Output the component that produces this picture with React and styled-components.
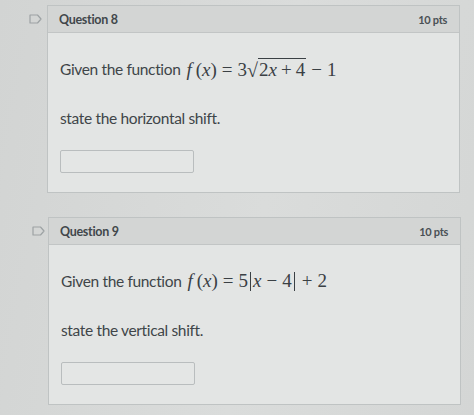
import React from 'react'
import styled, {createGlobalStyle} from 'styled-components'

const GlobalStyle = createGlobalStyle`
  html, body {
    margin: 0;
    padding: 0;
    background: #d5d7d6;
  }
  body {
    font-family: Lato, "Noto Sans", sans-serif;
    color: #3d4347;
  }
`

const Page = styled.div`
  width: 474px;
  height: 415px;
  padding-top: 5px;
  box-sizing: border-box;
  display: flex;
  flex-direction: column;
  gap: 24px;
  background: linear-gradient(100deg, #d2d4d3 0%, #dadcdb 55%, #d4d6d5 100%);
  overflow: hidden;
`

const Row = styled.div`
  display: flex;
  align-items: flex-start;
  padding-left: ${p => p.$indent}px;
`

const Flag = styled.div`
  width: ${p => p.$gutter}px;
  height: 27px;
  display: flex;
  align-items: center;
  flex-shrink: 0;
`

const Card = styled.section`
  width: 413px;
  border: 1px solid #bfc3c3;
  box-sizing: border-box;
  background: #e3e5e4;
`

const Header = styled.header`
  height: 27px;
  display: flex;
  align-items: center;
  justify-content: space-between;
  padding: 0 12px 0 11px;
  background: #d3d5d4;
  border-bottom: 1px solid #c2c5c5;
  box-sizing: border-box;
`

const Title = styled.h3`
  margin: 0;
  font-size: 12.5px;
  font-weight: 700;
  letter-spacing: -0.3px;
  color: #41474b;
`

const Points = styled.span`
  font-size: 11px;
  font-weight: 700;
  letter-spacing: -0.3px;
  color: #4a5054;
`

const Body = styled.div`
  padding: 24px 13px 19px 12px;
  display: flex;
  flex-direction: column;
`

const Line = styled.p`
  margin: 0;
  height: 24px;
  display: flex;
  align-items: center;
  font-size: 15.5px;
  letter-spacing: -0.35px;
  color: #3f4549;
  white-space: nowrap;
`

const Prompt = styled(Line)`
  margin-top: 25px;
`

const Math = styled.span`
  font-family: "Liberation Serif", "DejaVu Serif", serif;
  font-size: 19px;
  letter-spacing: 0;
  margin-left: 6px;
  display: inline-flex;
  align-items: baseline;
  color: #3a4044;
`

const I = styled.i`
  font-style: italic;
`

const Paren = styled.span`
  margin-left: ${p => p.$gap || 0}px;
`

const Op = styled.span`
  margin: 0 ${p => p.$space || 5}px;
`

const Sqrt = styled.span`
  display: inline-flex;
  align-items: baseline;
`

const Radical = styled.span`
  font-size: 20px;
  transform: translateY(1px);
`

const Radicand = styled.span`
  border-top: 1px solid #3a4044;
  padding: 1px 1px 0 1px;
  line-height: 20px;
`

const Abs = styled.span`
  display: inline-block;
  width: 1px;
  height: 19px;
  background: #3a4044;
  margin: 0 2px;
  align-self: center;
`

const Answer = styled.input`
  margin-top: 20px;
  width: 134px;
  height: 23px;
  box-sizing: border-box;
  border: 1px solid #b9bdbe;
  border-radius: 2px;
  background: #e4e6e5;
  outline: none;
`

const FlagIcon = () => (
  <svg width="13" height="10" viewBox="0 0 13 10">
    <path d="M1 1 H8.5 L12 5 L8.5 9 H1 Z" fill="none" stroke="#9da2a4" strokeWidth="1.2" strokeLinejoin="round" />
  </svg>
)

const Question = ({indent, gutter, number, children, prompt}) => (
  <Row $indent={indent}>
    <Flag $gutter={gutter}>
      <FlagIcon />
    </Flag>
    <Card>
      <Header>
        <Title>Question {number}</Title>
        <Points>10 pts</Points>
      </Header>
      <Body>
        <Line>
          Given the function
          <Math>{children}</Math>
        </Line>
        <Prompt>{prompt}</Prompt>
        <Answer type="text" />
      </Body>
    </Card>
  </Row>
)

export default function App() {
  return (
    <>
      <GlobalStyle />
      <Page>
        <Question indent={29} gutter={18} number={8} prompt="state the horizontal shift.">
          <I>f</I>
          <Paren $gap={4}>(</Paren>
          <I>x</I>
          <Paren>)</Paren>
          <Op>=</Op>
          <span>3</span>
          <Sqrt>
            <Radical>√</Radical>
            <Radicand>
              2<I>x</I>
              <Op $space={4}>+</Op>4
            </Radicand>
          </Sqrt>
          <Op>−</Op>
          <span>1</span>
        </Question>
        <Question indent={32} gutter={16} number={9} prompt="state the vertical shift.">
          <I>f</I>
          <Paren $gap={4}>(</Paren>
          <I>x</I>
          <Paren>)</Paren>
          <Op>=</Op>
          <span>5</span>
          <Abs />
          <I>x</I>
          <Op>−</Op>
          <span>4</span>
          <Abs />
          <Op>+</Op>
          <span>2</span>
        </Question>
      </Page>
    </>
  )
}
